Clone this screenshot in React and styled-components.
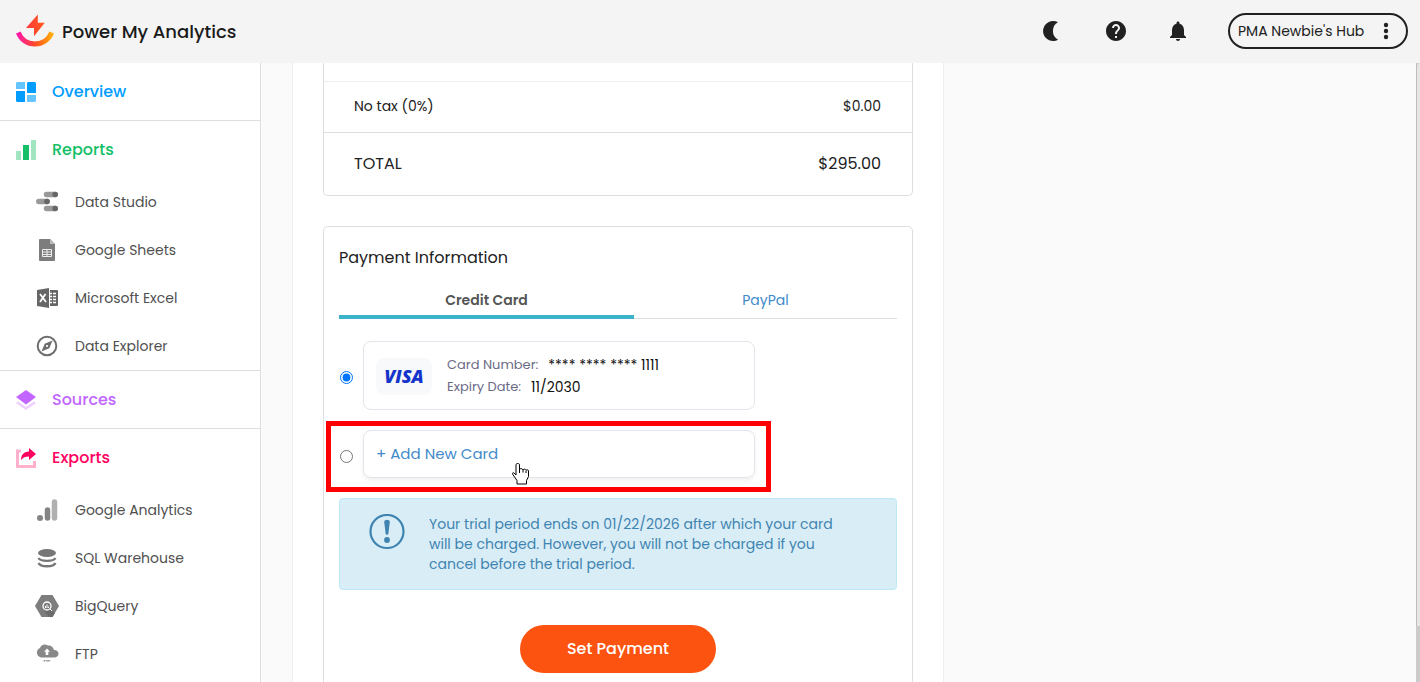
import React from 'react'
import styled, { createGlobalStyle } from 'styled-components'

const GlobalStyle = createGlobalStyle`
  * {
    box-sizing: border-box;
  }

  body {
    margin: 0;
    font-family: Poppins, Inter, sans-serif;
    font-size: 14px;
    color: #212121;
    background: #fafafa;
  }

  a {
    text-decoration: none;
  }
`

const Page = styled.div`
  display: flex;
  flex-direction: column;
  height: 100vh;
  overflow: hidden;
`

const Header = styled.header`
  display: flex;
  flex: none;
  align-items: center;
  justify-content: space-between;
  height: 63px;
  padding: 0 12px 1px 16px;
  background: #f4f4f4;
`

const Brand = styled.a`
  display: flex;
  align-items: center;
  gap: 8px;
  color: #1a1a1a;
  font-size: 18px;
  font-weight: 500;
`

const Toolbar = styled.div`
  display: flex;
  align-items: center;
  gap: 38px;
`

const IconButton = styled.button`
  display: flex;
  padding: 0;
  border: 0;
  background: none;
  color: #212121;
`

const HubButton = styled.button`
  display: flex;
  align-items: center;
  justify-content: space-between;
  width: 180px;
  height: 36px;
  padding: 0 8px;
  border: 2px solid #212121;
  border-radius: 18px;
  background: none;
  color: #212121;
  font-family: inherit;
  font-size: 14px;
  white-space: nowrap;
`

const Body = styled.div`
  display: flex;
  flex: 1;
  min-height: 0;
`

const Sidebar = styled.nav`
  flex: none;
  width: 261px;
  overflow: hidden;
  border-right: 1px solid #dedede;
  background: #fff;
`

const NavGroup = styled.div`
  & + & {
    border-top: 1px solid #dedede;
  }
`

const NavHeading = styled.a`
  display: flex;
  align-items: center;
  gap: 16px;
  height: 57px;
  padding-left: 16px;
  color: ${(props) => props.$color};
  font-size: 16px;
  font-weight: 500;
`

const NavItem = styled.a`
  display: flex;
  align-items: center;
  gap: 16px;
  height: 48px;
  padding-left: 35px;
  color: #505050;
  font-size: 14px;
`

const Main = styled.main`
  flex: 1;
  overflow: hidden;
  padding-left: 31px;
`

const Panel = styled.div`
  width: 652px;
  min-height: 100%;
  padding: 0 30px;
  border: 1px solid #eeeeee;
  border-width: 0 1px;
  background: #fff;
`

const Totals = styled.table`
  width: 100%;
  margin-bottom: 30px;
  border: 1px solid #dedede;
  border-top: 0;
  border-radius: 0 0 5px 5px;
  border-spacing: 0;
`

const TotalsRow = styled.tr`
  height: ${(props) => props.$height}px;
  font-size: ${(props) => props.$size || 14}px;

  th,
  td {
    padding: 0 31px 1px 30px;
    border-bottom: ${(props) => props.$line ? '1px solid ' + props.$line : '0'};
    font-weight: 400;
    text-align: left;
  }

  td {
    text-align: right;
  }
`

const PaymentCard = styled.section`
  padding: 16px 15px 60px;
  border: 1px solid #dedede;
  border-radius: 5px;
`

const Title = styled.h2`
  margin: 0 0 10px;
  font-size: 16px;
  font-weight: 400;
  line-height: 30px;
`

const Tabs = styled.div`
  display: flex;
  margin-bottom: 22px;
  box-shadow: inset 0 -1px #dedede;
`

const Tab = styled.button`
  flex: ${(props) => props.$active ? '0 0 295px' : 1};
  height: 36px;
  padding: 3px 0 0;
  border: 0;
  border-bottom: 4px solid ${(props) => props.$active ? '#3bb3c8' : 'transparent'};
  background: none;
  color: ${(props) => props.$active ? '#555' : '#428bca'};
  font-family: inherit;
  font-size: 14px;
  font-weight: ${(props) => props.$active ? 600 : 400};
`

const Option = styled.div`
  position: relative;
  display: flex;
  align-items: center;
  gap: 9px;
  margin-bottom: 20px;
`

const Radio = styled.input`
  width: 13px;
  height: 13px;
  margin: 4px 1px 0;
`

const SavedCard = styled.label`
  display: flex;
  align-items: center;
  gap: 15px;
  width: 392px;
  height: 69px;
  padding: 1px 12px 0;
  border: 1px solid #e4e4ec;
  border-radius: 8px;
`

const VisaBadge = styled.span`
  display: flex;
  align-items: center;
  justify-content: center;
  width: 56px;
  height: 37px;
  border-radius: 8px;
  background: #f8f9fb;
  color: #1434cb;
  font-family: 'Open Sans', sans-serif;
  font-size: 18px;
  font-style: italic;
  font-weight: 800;
`

const CardDetails = styled.span`
  color: #6b6b86;
  font-size: 13px;
  line-height: 22px;
`

const DetailLine = styled.span`
  display: flex;
  gap: 10px;
`

const DetailValue = styled.span`
  color: #111;
  font-size: 14px;
`

const NewCard = styled.label`
  display: flex;
  align-items: center;
  width: 392px;
  height: 48px;
  padding: 0 12px 2px;
  border: 1px solid #e4e4ec;
  border-radius: 8px;
  box-shadow: 0 3px 5px rgba(0, 0, 0, 0.06);
  color: #428bca;
  font-size: 15px;
`

const Highlight = styled.div`
  position: absolute;
  top: -9px;
  left: -13px;
  width: 445px;
  height: 71px;
  border: 5px solid #f00;
  pointer-events: none;
`

const Pointer = styled.svg`
  position: absolute;
  top: 32px;
  left: 173px;
`

const Notice = styled.div`
  display: flex;
  gap: 24px;
  padding: 15px 60px 15px 29px;
  border: 1px solid #bce8f1;
  border-radius: 4px;
  background: #d9edf7;
  color: #3f84b0;
`

const NoticeText = styled.p`
  margin: 0;
  font-size: 14px;
  line-height: 20px;
`

const SubmitButton = styled.button`
  display: block;
  width: 196px;
  height: 48px;
  margin: 35px auto 0;
  padding: 0 0 2px;
  border: 0;
  border-radius: 24px;
  background: #fc5310;
  color: #fff;
  font-family: inherit;
  font-size: 16px;
  font-weight: 500;
`

const ScrollTrack = styled.div`
  flex: none;
  width: 4px;
  background: #cbcbcb;
`

const ScrollThumb = styled.div`
  height: 91%;
  border-left: 1px solid #bdbdbd;
  border-radius: 4px 0 0 0;
  background: #e6e6e6;
`

const Logo = () => (
  <svg width="38" height="34" viewBox="0 0 38 34" aria-hidden="true">
    <defs>
      <linearGradient id="smile" x1="0" x2="1">
        <stop offset="0" stopColor="#ff1aa8" />
        <stop offset="0.5" stopColor="#ff4a22" />
        <stop offset="1" stopColor="#ffac0c" />
      </linearGradient>
      <linearGradient id="bolt" x1="0" x2="1">
        <stop offset="0" stopColor="#ff3b3b" />
        <stop offset="1" stopColor="#ff5a1e" />
      </linearGradient>
    </defs>
    <path d="M2.300 18.500C5 25.500 11.200 30 18.900 30s14-4.500 16.800-11.500" fill="none" stroke="url(#smile)" strokeWidth="5" />
    <path d="M21.800 0.500L10 14h8v8.200L28.800 8.700h-7z" fill="url(#bolt)" />
  </svg>
)

const MoonIcon = () => (
  <svg width="24" height="24" viewBox="0 0 24 24" fill="currentColor">
    <path d="M11.300 2a10 10 0 1 0 4.700 18.700 10 10 0 0 1 0-17.400A10 10 0 0 0 11.300 2z" />
  </svg>
)

const HelpIcon = () => (
  <svg width="24" height="24" viewBox="0 0 24 24" fill="currentColor">
    <path d="M12 2C6.480 2 2 6.480 2 12s4.480 10 10 10 10-4.480 10-10S17.520 2 12 2zm1 17h-2v-2h2v2zm2.070-7.750l-.9.920C13.450 12.900 13 13.500 13 15h-2v-.5c0-1.100.45-2.100 1.170-2.830l1.240-1.260c.37-.36.590-.860.590-1.410 0-1.100-.9-2-2-2s-2 .9-2 2H8c0-2.210 1.790-4 4-4s4 1.790 4 4c0 .88-.36 1.680-.93 2.250z" stroke="#f4f4f4" strokeWidth="0" />
  </svg>
)

const BellIcon = () => (
  <svg width="24" height="24" viewBox="0 0 24 24" fill="currentColor">
    <path d="M12 22c1.100 0 2-.9 2-2h-4c0 1.100.890 2 2 2zm6-6v-5c0-3.070-1.640-5.640-4.500-6.320V4c0-.83-.67-1.500-1.500-1.500s-1.500.67-1.500 1.500v.68C7.630 5.360 6 7.920 6 11v5l-2 2v1h16v-1l-2-2z" />
  </svg>
)

const MoreIcon = () => (
  <svg width="24" height="24" viewBox="0 0 24 24" fill="currentColor">
    <circle cx="12" cy="6" r="2.200" />
    <circle cx="12" cy="12" r="2.200" />
    <circle cx="12" cy="18" r="2.200" />
  </svg>
)

const groupIcons = {
  overview: (
    <>
      <path d="M1 0h8v7H0V1zM11 13h9v6l-1 1h-8z" fill="#66c4ff" />
      <path d="M11 1l1-1h7l1 1v10h-9zM0 9h9v11H1l-1-1z" fill="#009dff" />
    </>
  ),
  reports: (
    <>
      <path d="M0 11h5v9H0zM15 0h5v20h-5z" fill="#a0e5c0" />
      <path d="M7 5h6v15H7z" fill="#14bf67" />
    </>
  ),
  sources: (
    <>
      <path d="M0 13l2-1.500 8 5.500 8-5.500 2 1.500-10 7z" fill="#edcfff" />
      <path d="M10 0l10 7-10 7.500L0 7z" fill="#c266ff" />
    </>
  ),
  exports: (
    <>
      <path d="M5 3H1.500v15.500h17V13" fill="none" stroke="#ffb0cc" strokeWidth="3" />
      <path d="M13 0l7 6-7 6V8.500c-4 0-6 1-8 3.500 0-5 3-8.500 8-8.500z" fill="#ff0060" />
    </>
  )
}

const itemIcons = {
  dataStudio: (
    <>
      <path d="M11.500 4.500h8.500M3.800 11.500H12M11.500 18.500h8.500" stroke="#999" strokeWidth="5.500" strokeLinecap="round" />
      <circle cx="20.200" cy="4.500" r="2.800" fill="#666" />
      <circle cx="12" cy="11.500" r="2.800" fill="#666" />
      <circle cx="20.200" cy="18.500" r="2.800" fill="#666" />
    </>
  ),
  sheets: (
    <>
      <path d="M5 1h10l5 5v16a1 1 0 0 1-1 1H5a1 1 0 0 1-1-1V2a1 1 0 0 1 1-1z" fill="#7d7d7d" />
      <path d="M15 1l5 5h-5z" fill="#bbb" />
      <path d="M7.500 11.500h9v7h-9zM7.500 14h9M7.500 16.500h9M12 11.500v7" stroke="#eee" fill="none" />
    </>
  ),
  excel: (
    <>
      <path d="M15 4h7a1 1 0 0 1 1 1v14a1 1 0 0 1-1 1h-7z" fill="#666" />
      <path d="M2 4l12-2v20L2 20z" fill="#666" />
      <path d="M5 8l6 8M10.500 8l-5.500 8" stroke="#fff" strokeWidth="1.800" />
      <path d="M15 7.500h2m1 0h3M15 10.500h2m1 0h3M15 13.500h2m1 0h3M15 16.500h2m1 0h3" stroke="#fff" strokeWidth="1.500" />
    </>
  ),
  explorer: (
    <>
      <circle cx="12" cy="12" r="9.300" fill="none" stroke="#6e6e6e" strokeWidth="2" />
      <path d="M17.500 6.500l-3.200 7.800-7.800 3.200 3.200-7.800zM12 10.900a1.100 1.100 0 1 0 0 2.200 1.100 1.100 0 0 0 0-2.200z" fill="#6e6e6e" fillRule="evenodd" />
    </>
  ),
  analytics: (
    <>
      <path d="M19.500 4v16" stroke="#b0b0b0" strokeWidth="5.500" strokeLinecap="round" />
      <path d="M12.500 12v8" stroke="#858585" strokeWidth="5.500" strokeLinecap="round" />
      <circle cx="5" cy="20" r="3" fill="#858585" />
    </>
  ),
  sql: (
    <>
      <ellipse cx="12" cy="7" rx="9" ry="4" fill="#777" />
      <path d="M3.500 12c2 3.800 15 3.800 17 0M3.500 17c2 4.300 15 4.300 17 0" fill="none" stroke="#777" strokeWidth="2.300" />
    </>
  ),
  bigQuery: (
    <>
      <path d="M6.500 1h11L24 12l-6.500 11h-11L0 12z" fill="#7d7d7d" />
      <path d="M15 15l5 4-2.500 4H14l-5-6z" fill="#6c6c6c" />
      <circle cx="12" cy="12" r="4" fill="none" stroke="#fff" strokeWidth="1.300" />
      <path d="M10.500 12v2M12 10.500v3.500M13.500 12.500V14M15 15l2 2" stroke="#fff" />
    </>
  ),
  ftp: (
    <>
      <path d="M6 15.500a5 5 0 0 1-1-9.500c1-3.500 5-4.500 8-2.500 3-.5 5 1.500 6 4.500 6 0 6 7.500 0 7.500z" fill="#888" />
      <path d="M12 6.500l3 3.200h-1.700V13h-2.600V9.700H9z" fill="#fff" />
      <text x="12" y="20" textAnchor="middle" fontSize="4" fontWeight="700" fill="#888">FTP</text>
    </>
  )
}

const navGroups = [
  { name: 'Overview', color: '#009dff', icon: 'overview', items: [] },
  {
    name: 'Reports',
    color: '#14bf67',
    icon: 'reports',
    items: [
      { name: 'Data Studio', icon: 'dataStudio' },
      { name: 'Google Sheets', icon: 'sheets' },
      { name: 'Microsoft Excel', icon: 'excel' },
      { name: 'Data Explorer', icon: 'explorer' }
    ]
  },
  { name: 'Sources', color: '#c266ff', icon: 'sources', items: [] },
  {
    name: 'Exports',
    color: '#ff0060',
    icon: 'exports',
    items: [
      { name: 'Google Analytics', icon: 'analytics' },
      { name: 'SQL Warehouse', icon: 'sql' },
      { name: 'BigQuery', icon: 'bigQuery' },
      { name: 'FTP', icon: 'ftp' }
    ]
  }
]

const Navigation = () => (
  <Sidebar>
    {navGroups.map((group) => (
      <NavGroup key={group.name}>
        <NavHeading href="#" $color={group.color}>
          <svg width="20" height="20" viewBox="0 0 20 20">{groupIcons[group.icon]}</svg>
          {group.name}
        </NavHeading>
        {group.items.map((item) => (
          <NavItem href="#" key={item.name}>
            <svg width="24" height="24" viewBox="0 0 24 24">{itemIcons[item.icon]}</svg>
            {item.name}
          </NavItem>
        ))}
      </NavGroup>
    ))}
  </Sidebar>
)

const OrderTotals = () => (
  <Totals>
    <tbody>
      <TotalsRow $height={19} $line="#eeeeee"><td colSpan={2}></td></TotalsRow>
      <TotalsRow $height={51} $line="#dedede">
        <th scope="row">No tax (0%)</th>
        <td>$0.00</td>
      </TotalsRow>
      <TotalsRow $height={62} $size={16}>
        <th scope="row">TOTAL</th>
        <td>$295.00</td>
      </TotalsRow>
    </tbody>
  </Totals>
)

const Payment = () => (
  <PaymentCard>
    <Title>Payment Information</Title>
    <Tabs>
      <Tab type="button" $active>Credit Card</Tab>
      <Tab type="button">PayPal</Tab>
    </Tabs>
    <Option>
      <Radio type="radio" name="card" id="saved" defaultChecked />
      <SavedCard htmlFor="saved">
        <VisaBadge>VISA</VisaBadge>
        <CardDetails>
          <DetailLine>Card Number: <DetailValue>**** **** **** 1111</DetailValue></DetailLine>
          <DetailLine>Expiry Date: <DetailValue>11/2030</DetailValue></DetailLine>
        </CardDetails>
      </SavedCard>
    </Option>
    <Option>
      <Radio type="radio" name="card" id="new" />
      <NewCard htmlFor="new">+ Add New Card</NewCard>
      <Highlight />
      <Pointer width="17" height="23" viewBox="0 0 17 23" aria-hidden="true">
        <path d="M5.500 1.500c-1 0-1.500.5-1.500 1.500v10l-2-2c-1-.8-2 .2-1.400 1.200L5 18.500V22h9.500v-3.500l2-4V9c0-1.500-2-1.500-2.500-.5C14 7 11.500 6.500 11 8 10.500 6.500 8 6 7.500 7.500V3c0-1-.5-1.500-2-1.500z" fill="#fff" stroke="#000" />
        <path d="M7.500 7v4M11 8v2.500M14 9v2" stroke="#000" />
      </Pointer>
    </Option>
    <Notice>
      <svg width="36" height="36" viewBox="0 0 36 36" aria-hidden="true">
        <circle cx="18" cy="17.500" r="16.500" fill="none" stroke="currentColor" strokeWidth="2.200" />
        <path d="M15.200 8c0-3 5.600-3 5.600 0L19.400 19.500c-.3 1.800-2.500 1.800-2.800 0z" fill="currentColor" />
        <circle cx="18" cy="26" r="2.900" fill="currentColor" />
      </svg>
      <NoticeText>
        Your trial period ends on 01/22/2026 after which your card<br />
        will be charged. However, you will not be charged if you<br />
        cancel before the trial period.
      </NoticeText>
    </Notice>
    <SubmitButton type="button">Set Payment</SubmitButton>
  </PaymentCard>
)

const App = () => {
  return (
    <Page>
      <GlobalStyle />
      <Header>
        <Brand href="#">
          <Logo />
          Power My Analytics
        </Brand>
        <Toolbar>
          <IconButton aria-label="Dark mode"><MoonIcon /></IconButton>
          <IconButton aria-label="Help"><HelpIcon /></IconButton>
          <IconButton aria-label="Notifications"><BellIcon /></IconButton>
          <HubButton>PMA Newbie's Hub <MoreIcon /></HubButton>
        </Toolbar>
      </Header>
      <Body>
        <Navigation />
        <Main>
          <Panel>
            <OrderTotals />
            <Payment />
          </Panel>
        </Main>
        <ScrollTrack><ScrollThumb /></ScrollTrack>
      </Body>
    </Page>
  )
}

export default App
